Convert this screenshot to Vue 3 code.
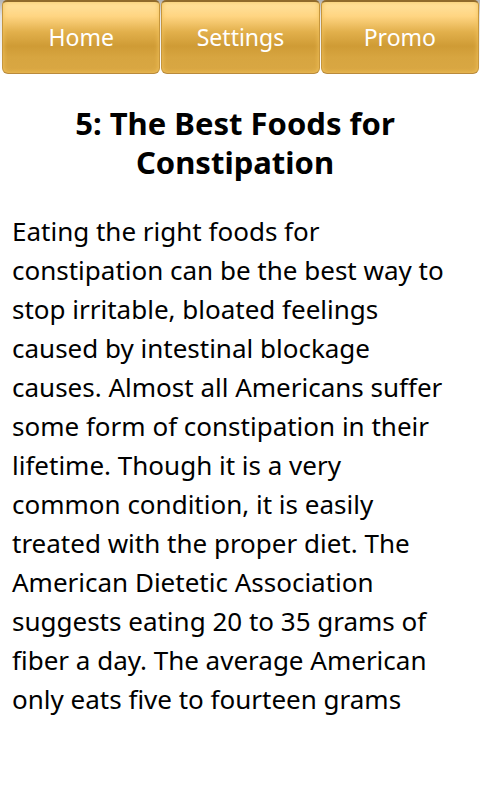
<template>
  <div class="page">
    <nav class="tabs">
      <button v-for="tab in tabs" :key="tab" type="button" class="tab">{{ tab }}</button>
    </nav>
    <main class="article">
      <h1 class="title">5: The Best Foods for Constipation</h1>
      <p class="content">{{ content }}</p>
    </main>
  </div>
</template>

<script setup>
const tabs = ['Home', 'Settings', 'Promo'];

const content =
  'Eating the right foods for constipation can be the best way to stop irritable, bloated feelings caused by intestinal blockage causes. Almost all Americans suffer some form of constipation in their lifetime. Though it is a very common condition, it is easily treated with the proper diet. The American Dietetic Association suggests eating 20 to 35 grams of fiber a day. The average American only eats five to fourteen grams';
</script>

<style>
  body {
    background: #fff;
  }
</style>

<style scoped>
  .page {
    font-family: "Noto Sans", "Open Sans", sans-serif;
    color: #000;
  }
  .tabs {
    display: flex;
    gap: 1px;
    padding: 0 1px 0 2px;
    background: linear-gradient(#b5b5b5, #e4e4e4 16px, #fff);
  }
  .tab {
    flex: 1;
    height: 74px;
    padding: 0 0 2px;
    border: 1px solid #c6963c;
    border-top: 2px solid #8f6a2c;
    border-bottom-color: #b98a3c;
    border-radius: 5px 5px 6px 6px;
    background: linear-gradient(#ffe3a0, #ffd582 20%, #e2b04c 42%, #cf9b35 62%, #d7a540 78%, #d9a743);
    box-shadow: inset 0 0 5px #f4c45e;
    color: #fff;
    font-family: inherit;
    font-size: 23px;
    line-height: 32px;
    cursor: pointer;
  }
  .article {
    padding: 30px 22px 30px 12px;
  }
  .title {
    margin: 0 0 30px;
    font-size: 31px;
    line-height: 39px;
    text-align: center;
  }
  .content {
    margin: 0;
    padding-right: 10px;
    font-size: 26px;
    line-height: 39px;
  }
</style>
